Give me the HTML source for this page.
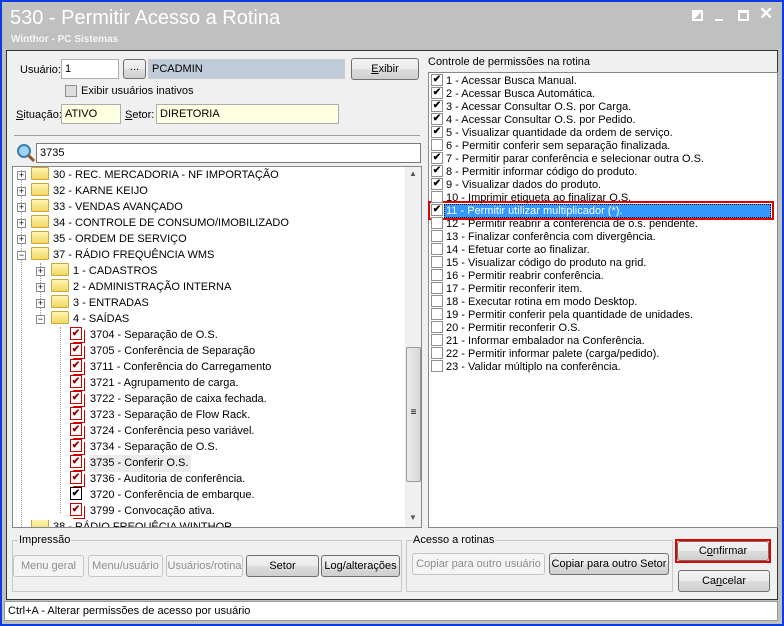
<!DOCTYPE html>
<html><head><meta charset="utf-8"><style>
*{margin:0;padding:0;box-sizing:border-box}
body{width:784px;height:626px;overflow:hidden;background:#0a3ee0;font-family:"Liberation Sans",sans-serif;font-size:11px;color:#000;position:relative}
.a{position:absolute}
.win{left:2px;top:2px;width:780px;height:622px;background:#c0c0c0}
.inp{position:absolute;background:#fff;border:1px solid #abadb3;padding:1px 3px;font-size:11px;line-height:16px;white-space:nowrap}
.btn{position:absolute;border:1px solid #707070;border-radius:3px;background:linear-gradient(#f2f2f2,#ebebeb 50%,#dddddd 51%,#cfcfcf);text-align:center;font-size:11px;line-height:20px;white-space:nowrap}
.dis{color:#8d8d8d;border-color:#c5c5c5;background:#f4f4f4}
.row{position:absolute;height:16px;line-height:16px;white-space:nowrap}
.fold{display:inline-block;width:18px;height:13px;background:linear-gradient(#fff6b0,#f3d766);border:1px solid #c9a93a;vertical-align:-2px;margin-right:4px;border-radius:1px}
.pm{position:absolute;width:9px;height:9px;border:1px solid #8a8a8a;background:#fff;font-size:9px;line-height:7px;text-align:center;color:#000}
.rr{position:absolute;height:16px;line-height:16px;white-space:nowrap;padding-left:20px}
.rc{position:absolute;left:0;top:0;width:12px;height:13px;border:1px solid #c00;background:#fff;box-shadow:2px 2px 0 #fff,3px 3px 0 #c00;color:#900;font-size:10px;line-height:11px;text-align:center;font-weight:bold}
.cb{position:absolute;width:12px;height:12px;border:1px solid #8e8f8f;background:#fff;font-size:10px;line-height:10px;text-align:center;font-weight:bold}
.li{position:absolute;left:446px;height:13px;line-height:13px;white-space:nowrap}
.grp{position:absolute;border:1px solid #c8c8c8}
.grp span{position:absolute;top:-8px;left:5px;background:#f0f0f0;padding:0 1px;line-height:14px}
</style></head><body>
<div class="a win"></div>
<div class="a" style="left:10px;top:7px;font-size:20px;color:#fff">530 - Permitir Acesso a Rotina</div>
<div class="a" style="left:11px;top:34px;font-size:10px;font-weight:bold;color:#f4f4f4">Winthor - PC Sistemas</div>
<div class="a" style="left:692px;top:10px;width:11px;height:11px;border:2px solid #fff;background:linear-gradient(135deg,#fff 50%,transparent 50%)"></div>
<div class="a" style="left:715px;top:19px;width:8px;height:2px;background:#fff"></div>
<div class="a" style="left:738px;top:10px;width:11px;height:11px;border:2px solid #fff;border-top-width:3px"></div>
<div class="a" style="left:759px;top:4px;color:#fff;font-size:17px;font-weight:bold">✕</div>
<div class="a" style="left:6px;top:50px;width:772px;height:550px;background:#f0f0f0;border:1px solid #333"></div>

<div class="a" style="left:20px;top:64px">Usuário:</div>
<div class="inp" style="left:61px;top:59px;width:58px;height:20px">1</div>
<div class="btn" style="left:123px;top:59px;width:23px;height:20px;line-height:14px">...</div>
<div class="inp" style="left:148px;top:59px;width:197px;height:20px;background:#bfcbd8;border-color:#ccc">PCADMIN</div>
<div class="btn" style="left:351px;top:58px;width:68px;height:22px"><u>E</u>xibir</div>
<div class="cb" style="left:65px;top:85px;background:#ddd"></div>
<div class="a" style="left:81px;top:85px">Exibir usuários inativos</div>
<div class="a" style="left:16px;top:109px"><u>S</u>ituação:</div>
<div class="inp" style="left:61px;top:104px;width:60px;height:20px;background:#ffffe1">ATIVO</div>
<div class="a" style="left:125px;top:109px"><u>S</u>etor:</div>
<div class="inp" style="left:156px;top:104px;width:183px;height:20px;background:#ffffe1">DIRETORIA</div>
<div class="a" style="left:14px;top:135px;width:406px;height:1px;background:#a0a0a0"></div>
<svg class="a" style="left:16px;top:143px" width="20" height="20"><circle cx="8" cy="8" r="6" fill="#9fd3f4" stroke="#3a7db8" stroke-width="2"/><line x1="12" y1="12" x2="18" y2="18" stroke="#8b5a2b" stroke-width="3"/></svg>
<div class="inp" style="left:36px;top:143px;width:385px;height:20px;border-color:#7a7a7a">3735</div>

<div class="a" style="left:12px;top:166px;width:410px;height:362px;background:#fff;border:1px solid #828790;overflow:hidden">
<div class="a" style="left:392px;top:0;width:17px;height:360px;background:#f0f0f0"></div>
<div class="a" style="left:393px;top:180px;width:15px;height:135px;background:linear-gradient(90deg,#eaeaea,#d8d8d8);border:1px solid #999;border-radius:2px;text-align:center;line-height:130px;font-size:10px">≡</div>
<div class="a" style="left:396px;top:2px;font-size:8px;color:#555">▲</div>
<div class="a" style="left:396px;top:346px;font-size:8px;color:#555">▼</div>
</div>
<div class="a" style="left:21px;top:170px;width:0;height:357px;border-left:1px dotted #999"></div>
<div class="a" style="left:40px;top:263px;width:0;height:60px;border-left:1px dotted #999"></div>
<div class="a" style="left:60px;top:327px;width:0;height:186px;border-left:1px dotted #999"></div>
<div class="pm" style="left:17px;top:171px">+</div><div class="row" style="left:31px;top:167px"><span class="fold"></span>30 - REC. MERCADORIA - NF IMPORTAÇÃO</div>
<div class="pm" style="left:17px;top:187px">+</div><div class="row" style="left:31px;top:183px"><span class="fold"></span>32 - KARNE KEIJO</div>
<div class="pm" style="left:17px;top:203px">+</div><div class="row" style="left:31px;top:199px"><span class="fold"></span>33 - VENDAS AVANÇADO</div>
<div class="pm" style="left:17px;top:219px">+</div><div class="row" style="left:31px;top:215px"><span class="fold"></span>34 - CONTROLE DE CONSUMO/IMOBILIZADO</div>
<div class="pm" style="left:17px;top:235px">+</div><div class="row" style="left:31px;top:231px"><span class="fold"></span>35 - ORDEM DE SERVIÇO</div>
<div class="pm" style="left:17px;top:251px">−</div><div class="row" style="left:31px;top:247px"><span class="fold"></span>37 - RÁDIO FREQUÊNCIA WMS</div>
<div class="pm" style="left:36px;top:267px">+</div><div class="row" style="left:51px;top:263px"><span class="fold"></span>1 - CADASTROS</div>
<div class="pm" style="left:36px;top:283px">+</div><div class="row" style="left:51px;top:279px"><span class="fold"></span>2 - ADMINISTRAÇÃO INTERNA</div>
<div class="pm" style="left:36px;top:299px">+</div><div class="row" style="left:51px;top:295px"><span class="fold"></span>3 - ENTRADAS</div>
<div class="pm" style="left:36px;top:315px">−</div><div class="row" style="left:51px;top:311px"><span class="fold"></span>4 - SAÍDAS</div>
<div class="rr" style="left:70px;top:327px"><span class="rc">✔</span>3704 - Separação de O.S.</div>
<div class="rr" style="left:70px;top:343px"><span class="rc">✔</span>3705 - Conferência de Separação</div>
<div class="rr" style="left:70px;top:359px"><span class="rc">✔</span>3711 - Conferência do Carregamento</div>
<div class="rr" style="left:70px;top:375px"><span class="rc">✔</span>3721 - Agrupamento de carga.</div>
<div class="rr" style="left:70px;top:391px"><span class="rc">✔</span>3722 - Separação de caixa fechada.</div>
<div class="rr" style="left:70px;top:407px"><span class="rc">✔</span>3723 - Separação de Flow Rack.</div>
<div class="rr" style="left:70px;top:423px"><span class="rc">✔</span>3724 - Conferência peso variável.</div>
<div class="rr" style="left:70px;top:439px"><span class="rc">✔</span>3734 - Separação de O.S.</div>
<div class="a" style="left:89px;top:455px;width:102px;height:17px;background:#ececec"></div>
<div class="rr" style="left:70px;top:455px"><span class="rc">✔</span>3735 - Conferir O.S.</div>
<div class="rr" style="left:70px;top:471px"><span class="rc">✔</span>3736 - Auditoria de conferência.</div>
<div class="rr" style="left:70px;top:487px"><span class="rc" style="border-color:#000;box-shadow:none;color:#000">✔</span>3720 - Conferência de embarque.</div>
<div class="rr" style="left:70px;top:503px"><span class="rc">✔</span>3799 - Convocação ativa.</div>
<div class="a" style="left:13px;top:520px;width:390px;height:7px;overflow:hidden"><div class="row" style="left:18px;top:-1px"><span class="fold"></span>38 - RÁDIO FREQUÊCIA WINTHOR</div></div>

<div class="a" style="left:428px;top:56px">Controle de permissões na rotina</div>
<div class="a" style="left:428px;top:72px;width:350px;height:456px;background:#fff;border:1px solid #828790"></div>
<div class="a" style="left:444px;top:204px;width:327px;height:14px;background:#3399ff;border:1px dotted #000"></div>
<div class="a" style="left:428px;top:201px;width:346px;height:19px;border:2px solid #e00000"></div>
<div id="L"></div>
<script>
var t=["1 - Acessar Busca Manual.","2 - Acessar Busca Automática.","3 - Acessar Consultar O.S. por Carga.","4 - Acessar Consultar O.S. por Pedido.","5 - Visualizar quantidade da ordem de serviço.","6 - Permitir conferir sem separação finalizada.","7 - Permitir parar conferência e selecionar outra O.S.","8 - Permitir informar código do produto.","9 - Visualizar dados do produto.","10 - Imprimir etiqueta ao finalizar O.S.","11 - Permitir utilizar multiplicador (*).","12 - Permitir reabrir a conferência de o.s. pendente.","13 - Finalizar conferência com divergência.","14 - Efetuar corte ao finalizar.","15 - Visualizar código do produto na grid.","16 - Permitir reabrir conferência.","17 - Permitir reconferir item.","18 - Executar rotina em modo Desktop.","19 - Permitir conferir pela quantidade de unidades.","20 - Permitir reconferir O.S.","21 - Informar embalador na Conferência.","22 - Permitir informar palete (carga/pedido).","23 - Validar múltiplo na conferência."];
var ck=[1,1,1,1,1,0,1,1,1,0,1],h="";
for(var i=0;i<t.length;i++){var y=74+i*13;h+='<div class="cb" style="left:431px;top:'+y+'px">'+(ck[i]?'✔':'')+'</div><div class="li" style="top:'+(y+1)+'px;'+(i==10?'color:#fff':'')+'">'+t[i]+'</div>';}
document.getElementById("L").outerHTML=h;
</script>

<div class="grp" style="left:12px;top:540px;width:390px;height:52px"><span>Impressão</span></div>
<div class="btn dis" style="left:13px;top:555px;width:71px;height:22px">Menu geral</div>
<div class="btn dis" style="left:88px;top:555px;width:75px;height:22px">Menu/usuário</div>
<div class="btn dis" style="left:166px;top:555px;width:77px;height:22px">Usuários/rotina</div>
<div class="btn" style="left:246px;top:555px;width:73px;height:22px">Setor</div>
<div class="btn" style="left:321px;top:555px;width:79px;height:22px">Log/alterações</div>
<div class="grp" style="left:406px;top:540px;width:267px;height:52px"><span>Acesso a rotinas</span></div>
<div class="btn dis" style="left:412px;top:553px;width:133px;height:22px">Copiar para outro usuário</div>
<div class="btn" style="left:549px;top:553px;width:120px;height:22px">Copiar para outro Setor</div>
<div class="a" style="left:675px;top:539px;width:96px;height:24px;border:2px solid #e00000"></div>
<div class="btn" style="left:677px;top:541px;width:92px;height:20px;line-height:18px">C<u>o</u>nfirmar</div>
<div class="btn" style="left:678px;top:570px;width:92px;height:22px">Ca<u>n</u>celar</div>

<div class="a" style="left:4px;top:601px;width:774px;height:20px;background:#fff;border:1px solid #999;padding-left:3px;line-height:18px">Ctrl+A - Alterar permissões de acesso por usuário</div>
</body></html>
